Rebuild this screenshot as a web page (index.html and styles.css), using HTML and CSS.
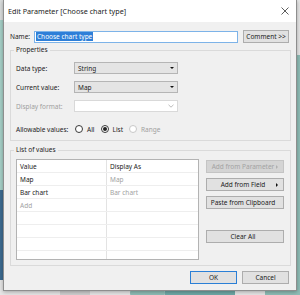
FILE: index.html
```html
<!DOCTYPE html>
<html>
<head>
<meta charset="utf-8">
<link rel="stylesheet" href="styles.css">
</head>
<body>
<div class="desk">
  <div class="bg bg-l1"></div>
  <div class="bg bg-l2"></div>
  <div class="bg bg-l3"></div>
  <div class="bg bg-r1"></div>
  <div class="bg bg-b1"></div>
  <div class="bg bg-b2"></div>
  <div class="bg bg-b3"></div>
  <div class="bg bg-b4"></div>

  <div class="dialog">
    <div class="titlebar">
      <span class="title">Edit Parameter [Choose chart type]</span>
      <svg class="close" width="8" height="8" viewBox="0 0 8 8"><path d="M0.5 0.5 L7.5 7.5 M7.5 0.5 L0.5 7.5" stroke="#333" stroke-width="0.8" fill="none"/></svg>
    </div>

    <div class="name-row">
      <span class="name-label">Name:</span>
      <div class="name-input"><span class="sel">Choose chart type</span></div>
      <div class="btn comment">Comment &gt;&gt;</div>
    </div>

    <div class="group props">
      <span class="group-title">Properties</span>
      <div class="prow first">
        <span class="plabel">Data type:</span>
        <div class="select"><span>String</span><span class="caret"></span></div>
      </div>
      <div class="prow">
        <span class="plabel">Current value:</span>
        <div class="select"><span>Map</span><span class="caret"></span></div>
      </div>
      <div class="prow">
        <span class="plabel disabled">Display format:</span>
        <div class="select blank"><span></span>
          <svg width="6" height="4" viewBox="0 0 6 4"><path d="M0.5 0.8 L3 3.2 L5.5 0.8" stroke="#a8a8a8" stroke-width="0.8" fill="none"/></svg>
        </div>
      </div>
      <div class="prow radios">
        <span class="plabel">Allowable values:</span>
        <span class="radio"></span><span class="rtext">All</span>
        <span class="radio on"></span><span class="rtext">List</span>
        <span class="radio off"></span><span class="rtext disabled">Range</span>
      </div>
    </div>

    <div class="group values">
      <span class="group-title">List of values</span>
      <div class="values-body">
        <div class="table">
          <div class="trow"><span class="c1">Value</span><span class="c2">Display As</span></div>
          <div class="trow"><span class="c1">Map</span><span class="c2 grey">Map</span></div>
          <div class="trow"><span class="c1">Bar chart</span><span class="c2 grey">Bar chart</span></div>
          <div class="trow"><span class="c1 grey">Add</span><span class="c2"></span></div>
          <div class="trow"><span class="c1"></span><span class="c2"></span></div>
          <div class="trow"><span class="c1"></span><span class="c2"></span></div>
          <div class="trow"><span class="c1"></span><span class="c2"></span></div>
          <div class="trow last"><span class="c1"></span><span class="c2"></span></div>
        </div>
        <div class="side">
          <div class="btn wide dis"><span class="btxt">Add from Parameter</span><span class="arrow"></span></div>
          <div class="btn wide"><span class="btxt">Add from Field</span><span class="arrow"></span></div>
          <div class="btn wide"><span class="btxt">Paste from Clipboard</span></div>
          <div class="btn wide clear"><span class="btxt">Clear All</span></div>
        </div>
      </div>
    </div>

    <div class="footer">
      <div class="btn ok">OK</div>
      <div class="btn">Cancel</div>
    </div>
  </div>
</div>
</body>
</html>
```

FILE: styles.css
```css
* { box-sizing: border-box; margin: 0; padding: 0; }
html, body { width: 300px; height: 295px; overflow: hidden; }
body {
  background: #e6e6e6;
  font-family: "Noto Sans", "Open Sans", sans-serif;
  font-size: 6.5px;
  color: #1c1c1c;
}
.desk { position: relative; width: 300px; height: 295px; }
.bg { position: absolute; }
.bg-l1 { left: 0; top: 20px; width: 4px; height: 170px; background: #a6d0c7; }
.bg-l2 { left: 0; top: 190px; width: 4px; height: 90px; background: #3d6b91; }
.bg-l3 { left: 0; top: 0; width: 4px; height: 20px; background: #d9dcdc; }
.bg-r1 { right: 0; top: 55px; width: 4px; height: 240px; background: #8fbdb6; }
.bg-b1 { left: 130px; top: 289px; width: 35px; height: 8px; background: #8fbdb6; border-radius: 4px; }
.bg-b2 { left: 165px; top: 289px; width: 70px; height: 8px; background: #6fa8a6; }
.bg-b3 { left: 265px; top: 289px; width: 35px; height: 8px; background: #8fbdb6; }
.bg-b4 { left: 60px; top: 291px; width: 30px; height: 4px; background: #cfcfcf; }

.dialog {
  position: relative;
  margin-left: 3px;
  width: 294px;
  height: 291px;
  background: #f0f0f0;
  border: 1px solid #8e8e8e;
  border-top: none;
  box-shadow: 0 1px 4px rgba(0, 0, 0, 0.3);
}
.titlebar {
  height: 22px;
  background: #fff;
  display: flex;
  align-items: center;
  justify-content: space-between;
  padding: 0 7px 0 4px;
  font-size: 7.2px;
  color: #222;
}
.close { display: block; }

.name-row {
  display: flex;
  align-items: center;
  height: 13px;
  margin-top: 8px;
  padding-left: 6px;
}
.name-label { width: 24px; }
.name-input {
  width: 204px;
  height: 12px;
  background: #fff;
  border: 1px solid #7db3e8;
  display: flex;
  align-items: center;
  padding-left: 1px;
}
.sel { background: #2e7fd8; color: #fff; line-height: 9px; padding: 0 1px; }
.btn {
  height: 13px;
  background: #e1e1e1;
  border: 1px solid #adadad;
  display: flex;
  align-items: center;
  justify-content: center;
  color: #222;
  white-space: nowrap;
}
.comment { width: 46px; margin-left: 5px; }

.group {
  margin-left: 6px;
  width: 281px;
  border: 1px solid #dadada;
  padding: 0 5px;
}
.group-title {
  display: block;
  width: max-content;
  height: 10px;
  line-height: 10px;
  margin: -6px 0 0 -2px;
  padding: 0 2px;
  background: #f0f0f0;
}
.props { margin-top: 7px; height: 91px; }
.prow { display: flex; align-items: center; height: 12px; margin-top: 7px; }
.prow.first { margin-top: 7px; }
.prow.radios { margin-top: 12px; height: 10px; }
.plabel { width: 58px; }
.disabled { color: #a0a0a0; }
.select {
  width: 104px;
  height: 12px;
  background: #e4e4e4;
  border: 1px solid #b5b5b5;
  display: flex;
  align-items: center;
  justify-content: space-between;
  padding: 0 3px 0 3px;
}
.select.blank { background: #fff; border-color: #d9d9d9; }
.caret {
  width: 0; height: 0;
  border-left: 2px solid transparent;
  border-right: 2px solid transparent;
  border-top: 2.5px solid #111;
}
.radio {
  width: 8px; height: 8px;
  border-radius: 50%;
  border: 1px solid #3a3a3a;
  background: #fff;
  margin-left: 1px;
  margin-right: 4px;
  display: flex; align-items: center; justify-content: center;
}
.radio.on::after { content: ""; width: 4px; height: 4px; border-radius: 50%; background: #222; }
.radio.off { border-color: #c8c8c8; }
.rtext { margin-right: 5px; }

.values { margin-top: 9px; height: 116px; }
.values-body { display: flex; margin-top: 4px; }
.table {
  width: 183px;
  height: 101px;
  background: #fff;
  border: 1px solid #b3b3b3;
  overflow: hidden;
}
.trow { display: flex; height: 13px; border-bottom: 1px solid #eeeeee; }
.trow.last { border-bottom: none; }
.c1 { width: 90px; padding-left: 3px; border-right: 1px solid #e3e3e3; display: flex; align-items: center; }
.c2 { flex: 1; padding-left: 3px; display: flex; align-items: center; }
.grey { color: #a2a2a2; }
.side { width: 78px; margin-left: 7px; padding-top: 1px; display: flex; flex-direction: column; gap: 5px; }
.btn.wide { width: 78px; position: relative; }
.btn.dis { background: #d4d4d4; border-color: #c4c4c4; color: #a3a3a3; }
.btn.clear { margin-top: 16px; }
.arrow {
  position: absolute; right: 5px; top: 4px;
  width: 0; height: 0;
  border-top: 2px solid transparent;
  border-bottom: 2px solid transparent;
  border-left: 2.5px solid #111;
}
.btn.dis .arrow { border-left-color: #b0b0b0; }
.btn.wide .btxt { margin-right: 4px; }

.footer { display: flex; justify-content: flex-end; gap: 5px; padding-right: 7px; margin-top: 5px; }
.footer .btn { width: 47px; }
.btn.ok { border-color: #2a7fd6; }
```
